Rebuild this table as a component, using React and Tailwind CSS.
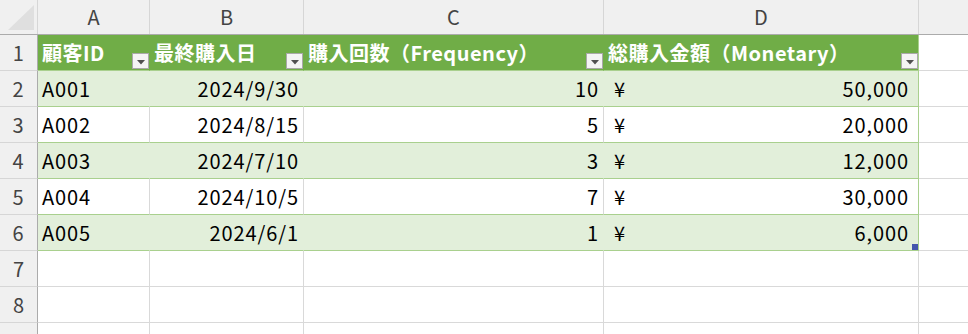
import React from 'react';

const FONT = { fontFamily: '"Noto Sans CJK JP", "Noto Sans", sans-serif' };

const rows = [
  { id: 'A001', date: '2024/9/30', freq: 10, amount: '50,000' },
  { id: 'A002', date: '2024/8/15', freq: 5, amount: '20,000' },
  { id: 'A003', date: '2024/7/10', freq: 3, amount: '12,000' },
  { id: 'A004', date: '2024/10/5', freq: 7, amount: '30,000' },
  { id: 'A005', date: '2024/6/1', freq: 1, amount: '6,000' },
];

// filter dropdown button in the table header
const FilterButton = () => (
  <div className="absolute right-0 bottom-[1px] w-[17px] h-[16px] bg-[#f4f4f4] border border-[#a9a9a9] flex items-center justify-center">
    <svg width="8" height="5" viewBox="0 0 8 5" className="mt-[2px]">
      <path d="M0 0 L8 0 L4 4.5 Z" fill="#505050" />
    </svg>
  </div>
);

const RowHead = ({ n }) => (
  <div className="w-[38px] shrink-0 h-full bg-[#f0f0f0] border-r border-r-[#ababab] border-b border-b-[#d6d6d6] flex items-center justify-center text-[20px] text-[#444]">
    {n}
  </div>
);

export default function App() {
  return (
    <div className="w-[968px] h-[334px] overflow-hidden bg-white text-black" style={FONT}>
      {/* column letters */}
      <div className="flex h-[35px] bg-[#f0f0f0] border-b border-b-[#ababab]">
        <div className="w-[38px] shrink-0 border-r border-r-[#d6d6d6] relative">
          <svg width="38" height="34" className="absolute left-0 top-0">
            <path d="M8 30 L34 30 L34 5 Z" fill="#dfdfdf" />
          </svg>
        </div>
        <div className="w-[112px] shrink-0 border-r border-r-[#d6d6d6] flex items-center justify-center text-[20px] text-[#444]">A</div>
        <div className="w-[154px] shrink-0 border-r border-r-[#d6d6d6] flex items-center justify-center text-[20px] text-[#444]">B</div>
        <div className="w-[300px] shrink-0 border-r border-r-[#d6d6d6] flex items-center justify-center text-[20px] text-[#444]">C</div>
        <div className="w-[315px] shrink-0 border-r border-r-[#d6d6d6] flex items-center justify-center text-[20px] text-[#444]">D</div>
        <div className="w-[110px] shrink-0 flex items-center justify-center text-[20px] text-[#444]">E</div>
      </div>

      {/* table header row */}
      <div className="flex h-[36px] tracking-[0.5px]">
        <RowHead n={1} />
        <div className="w-[112px] shrink-0 bg-[#70ad47] border-r border-r-[#70ad47] border-b border-b-[#a9d08e] relative flex items-center pl-[4px] text-[20px] font-bold text-white">
          顧客ID
          <FilterButton />
        </div>
        <div className="w-[154px] shrink-0 bg-[#70ad47] border-r border-r-[#70ad47] border-b border-b-[#a9d08e] relative flex items-center pl-[4px] text-[20px] font-bold text-white">
          最終購入日
          <FilterButton />
        </div>
        <div className="w-[300px] shrink-0 bg-[#70ad47] border-r border-r-[#70ad47] border-b border-b-[#a9d08e] relative flex items-center pl-[4px] text-[20px] font-bold text-white whitespace-nowrap">
          購入回数（Frequency）
          <FilterButton />
        </div>
        <div className="w-[315px] shrink-0 bg-[#70ad47] border-r border-r-[#a9d08e] border-b border-b-[#a9d08e] relative flex items-center pl-[4px] text-[20px] font-bold text-white whitespace-nowrap">
          総購入金額（Monetary）
          <FilterButton />
        </div>
        <div className="w-[110px] shrink-0 border-b border-b-[#d9d9d9]" />
      </div>

      {/* data rows */}
      {rows.map((r, i) => {
        const banded = i % 2 === 0;
        const bg = banded ? 'bg-[#e2efda]' : 'bg-white';
        const inner = banded ? 'border-r-[#e2efda]' : 'border-r-[#d9d9d9]';
        const last = i === rows.length - 1;
        return (
          <div key={r.id} className="flex h-[36px] text-[20px] tracking-[0.9px]">
            <RowHead n={i + 2} />
            <div className={`w-[112px] shrink-0 ${bg} border-r ${inner} border-b border-b-[#a9d08e] flex items-center pl-[4px]`}>
              {r.id}
            </div>
            <div className={`w-[154px] shrink-0 ${bg} border-r ${inner} border-b border-b-[#a9d08e] flex items-center justify-end pr-[4px]`}>
              {r.date}
            </div>
            <div className={`w-[300px] shrink-0 ${bg} border-r ${inner} border-b border-b-[#a9d08e] flex items-center justify-end pr-[4px]`}>
              {r.freq}
            </div>
            <div className={`w-[315px] shrink-0 ${bg} border-r border-r-[#a9d08e] border-b border-b-[#a9d08e] relative flex items-center justify-between pl-[10px] pr-[9px]`}>
              <span>¥</span>
              <span>{r.amount}</span>
              {last && <div className="absolute right-0 bottom-0 w-[6px] h-[6px] bg-[#4455ad]" />}
            </div>
            <div className="w-[110px] shrink-0 border-b border-b-[#d9d9d9]" />
          </div>
        );
      })}

      {/* empty rows */}
      {[7, 8, 9].map((n) => (
        <div key={n} className="flex h-[36px]">
          <RowHead n={n} />
          <div className="w-[112px] shrink-0 border-r border-r-[#d9d9d9] border-b border-b-[#d9d9d9]" />
          <div className="w-[154px] shrink-0 border-r border-r-[#d9d9d9] border-b border-b-[#d9d9d9]" />
          <div className="w-[300px] shrink-0 border-r border-r-[#d9d9d9] border-b border-b-[#d9d9d9]" />
          <div className="w-[315px] shrink-0 border-r border-r-[#d9d9d9] border-b border-b-[#d9d9d9]" />
          <div className="w-[110px] shrink-0 border-b border-b-[#d9d9d9]" />
        </div>
      ))}
    </div>
  );
}
